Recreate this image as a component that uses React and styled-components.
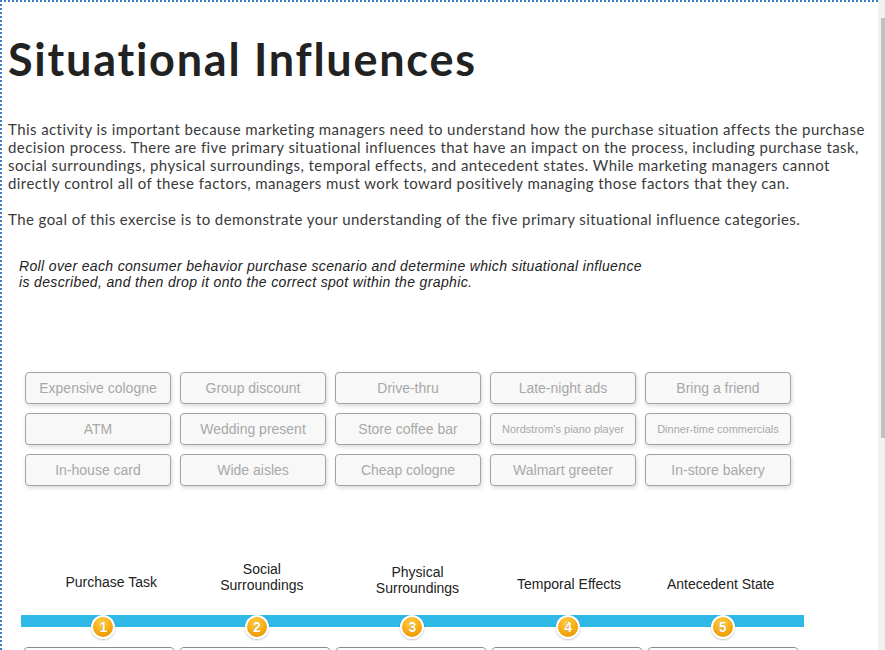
import styled, { createGlobalStyle } from "styled-components";

const GlobalStyle = createGlobalStyle`
  html, body {
    margin: 0;
    padding: 0;
    height: 650px;
    overflow: hidden;
    background: #ffffff;
  }
`;

const Frame = styled.div`
  display: flex;
  flex-direction: row;
  width: 885px;
  height: 650px;
`;

const Content = styled.div`
  flex: 1;
  border-top: 2px dotted #3b7cc4;
  border-left: 2px dotted #3b7cc4;
  padding: 0 0 0 6px;
  overflow: hidden;
`;

const ScrollTrack = styled.div`
  width: 7px;
  background: #f1f1f1;
  display: flex;
  justify-content: flex-end;

  .thumb {
    margin-top: 18px;
    width: 4px;
    height: 420px;
    background: #c1c1c1;
  }
`;

const Title = styled.h1`
  margin: 30px 0 0 0;
  font-family: "Lato", sans-serif;
  font-weight: 700;
  font-size: 45px;
  line-height: 54px;
  letter-spacing: 1.75px;
  font-variant-ligatures: none;
  color: #222222;
`;

const Intro = styled.p`
  margin: ${(p) => p.$top || 0}px 6px 0 0;
  font-family: "Lato", sans-serif;
  font-size: 15px;
  line-height: 18px;
  letter-spacing: 0.42px;
  color: #3a3a3a;
`;

const Instruction = styled.p`
  margin: 30px 0 0 11px;
  width: 625px;
  font-family: "Liberation Sans", Arial, sans-serif;
  font-style: italic;
  font-size: 14px;
  line-height: 16px;
  letter-spacing: 0.35px;
  color: #222222;
`;

const ChoiceGrid = styled.div`
  display: grid;
  grid-template-columns: repeat(5, 146px);
  column-gap: 9px;
  row-gap: 9px;
  margin: 82px 0 0 17px;
`;

const Choice = styled.div`
  height: 30px;
  display: flex;
  align-items: center;
  justify-content: center;
  border: 1px solid #a3a3a3;
  border-radius: 4px;
  background: #f8f8f8;
  box-shadow: 1px 2px 4px rgba(0, 0, 0, 0.15);
  font-family: "Liberation Sans", Arial, sans-serif;
  font-size: ${(p) => (p.$small ? "11px" : "14px")};
  color: #a8a8a8;
  white-space: nowrap;
`;

const Board = styled.div`
  width: 783px;
  margin: 73px 0 0 13px;
`;

const Labels = styled.div`
  display: grid;
  grid-template-columns: repeat(5, 1fr);
  height: 44px;
  align-items: end;
`;

// a positive nudge pads the left side, a negative one the right side
const nudge = (p) => {
  const s = p.$shift || 0;
  return s >= 0 ? `padding-left: ${s}px;` : `padding-right: ${-s}px;`;
};

const Label = styled.div`
  text-align: center;
  font-family: "Liberation Sans", Arial, sans-serif;
  font-size: 14px;
  line-height: 16px;
  color: #222222;
  padding-bottom: ${(p) => p.$bottom || 0}px;
  ${nudge}
`;

const Track = styled.div`
  margin-top: 12px;
  display: grid;
  grid-template-columns: repeat(5, 1fr);
  align-items: center;
  height: 12px;
  background: #2eb9e7;
`;

const Step = styled.div`
  display: flex;
  justify-content: center;
  ${nudge}
`;

const Badge = styled.div`
  width: 20px;
  height: 20px;
  border-radius: 50%;
  border: 2px solid #ffffff;
  background: radial-gradient(circle at 45% 30%, #ffd24a 0%, #f7a90f 55%, #e08a00 100%);
  box-shadow: 0 1px 2px rgba(0, 0, 0, 0.25);
  display: flex;
  align-items: center;
  justify-content: center;
  font-family: "Liberation Sans", Arial, sans-serif;
  font-weight: 700;
  font-size: 14px;
  color: #ffffff;
  text-shadow: 0 0 1px rgba(120, 60, 0, 0.6);
`;

const Drops = styled.div`
  display: grid;
  grid-template-columns: repeat(5, 152px);
  column-gap: 4px;
  margin: 20px 0 0 2px;
`;

const Drop = styled.div`
  height: 80px;
  border: 1px solid #8a8a8a;
  border-radius: 5px;
`;

const choices = [
  ["Expensive cologne"],
  ["Group discount"],
  ["Drive-thru"],
  ["Late-night ads"],
  ["Bring a friend"],
  ["ATM"],
  ["Wedding present"],
  ["Store coffee bar"],
  ["Nordstrom's piano player", true],
  ["Dinner-time commercials", true],
  ["In-house card"],
  ["Wide aisles"],
  ["Cheap cologne"],
  ["Walmart greeter"],
  ["In-store bakery"],
];

// text, horizontal nudge, distance from the bottom of the label row
const categories = [
  ["Purchase Task", 24, 13],
  ["Social\nSurroundings", 12, 10],
  ["Physical\nSurroundings", 10, 7],
  ["Temporal Effects", 0, 11],
  ["Antecedent State", -10, 11],
];

const stepShift = [8, 2, 0, -2, -6];

export default function App() {
  return (
    <>
      <GlobalStyle />
      <Frame>
        <Content>
          <Title>Situational Influences</Title>
          <Intro $top={34}>
            This activity is important because marketing managers need to
            understand how the purchase situation affects the purchase
            decision process. There are five primary situational influences
            that have an impact on the process, including purchase task,
            social surroundings, physical surroundings, temporal effects, and
            antecedent states. While marketing managers cannot directly control
            all of these factors, managers must work toward positively managing
            those factors that they can.
          </Intro>
          <Intro $top={18}>
            The goal of this exercise is to demonstrate your understanding of
            the five primary situational influence categories.
          </Intro>
          <Instruction>
            Roll over each consumer behavior purchase scenario and determine
            which situational influence is described, and then drop it onto
            the correct spot within the graphic.
          </Instruction>
          <ChoiceGrid>
            {choices.map(([text, small]) => (
              <Choice key={text} $small={small}>
                {text}
              </Choice>
            ))}
          </ChoiceGrid>
          <Board>
            <Labels>
              {categories.map(([text, shift, bottom]) => (
                <Label key={text} $shift={shift} $bottom={bottom}>
                  {text.split("\n").map((line) => (
                    <div key={line}>{line}</div>
                  ))}
                </Label>
              ))}
            </Labels>
            <Track>
              {stepShift.map((shift, i) => (
                <Step key={i} $shift={shift}>
                  <Badge>{i + 1}</Badge>
                </Step>
              ))}
            </Track>
            <Drops>
              {categories.map(([text]) => (
                <Drop key={text} />
              ))}
            </Drops>
          </Board>
        </Content>
        <ScrollTrack>
          <div className="thumb" />
        </ScrollTrack>
      </Frame>
    </>
  );
}
